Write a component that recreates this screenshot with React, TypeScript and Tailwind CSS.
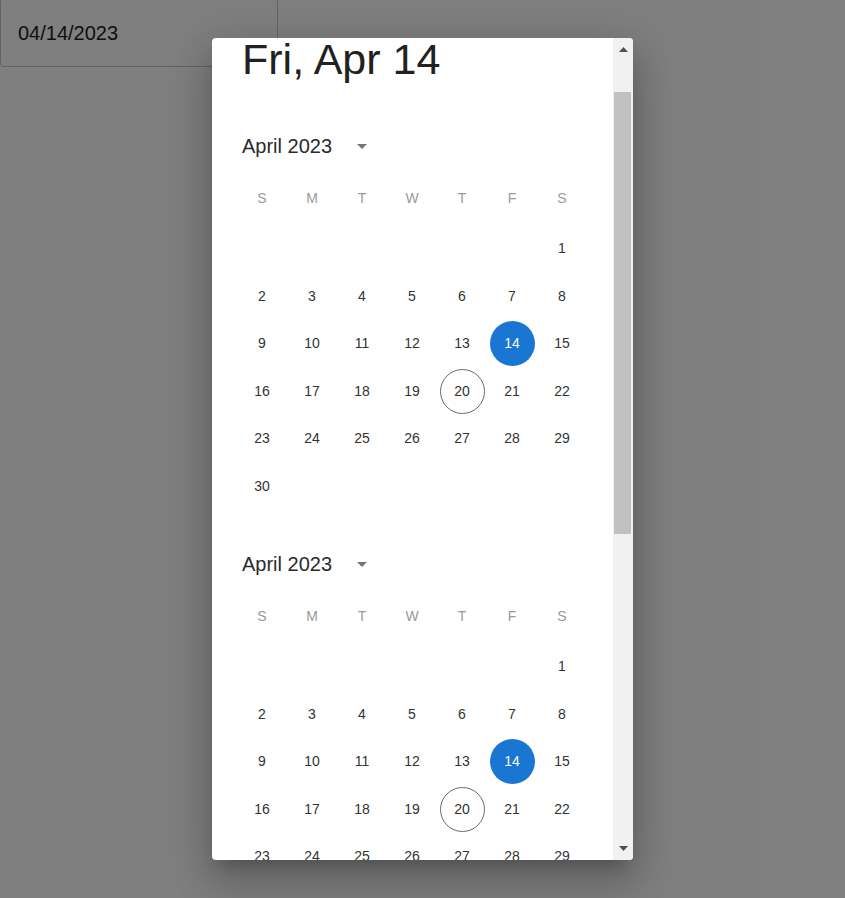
import React from "react";

const WEEKDAYS = ["S", "M", "T", "W", "T", "F", "S"];

// April 2023 starts on a Saturday
const LEAD = 6;
const DAYS_IN_MONTH = 30;
const SELECTED = 14;
const TODAY = 20;

function buildCells() {
  const cells: (number | null)[] = [];
  for (let i = 0; i < LEAD; i++) cells.push(null);
  for (let d = 1; d <= DAYS_IN_MONTH; d++) cells.push(d);
  while (cells.length % 7 !== 0) cells.push(null);
  return cells;
}

function ArrowDropDown() {
  return (
    <svg viewBox="0 0 24 24" className="w-6 h-6 ml-[18px] fill-[#757575]">
      <path d="M7 10l5 5 5-5z" />
    </svg>
  );
}

function Day({ day }: { day: number | null }) {
  if (day === null) return <div className="h-[47.5px]" />;
  const selected = day === SELECTED;
  const today = day === TODAY;
  return (
    <div className="h-[47.5px] flex items-center justify-center">
      <div
        className={
          "w-[45px] h-[45px] rounded-full flex items-center justify-center text-[14px] " +
          (selected
            ? "bg-[#1976d2] text-white"
            : today
            ? "border border-[#6b6b6b] text-[#333]"
            : "text-[#333]")
        }
      >
        {day}
      </div>
    </div>
  );
}

function Month() {
  const cells = buildCells();
  return (
    <div className="pb-[28px]">
      <div className="h-[52px] px-[30px] flex items-center">
        <span className="text-[20px] text-[#2b2b2b]">April 2023</span>
        <ArrowDropDown />
      </div>
      <div className="px-[25px]">
        <div className="grid grid-cols-[repeat(7,50px)] h-[53px] items-center">
          {WEEKDAYS.map((w, i) => (
            <div key={i} className="text-center text-[14px] text-[#9a9a9a]">
              {w}
            </div>
          ))}
        </div>
        <div className="grid grid-cols-[repeat(7,50px)]">
          {cells.map((d, i) => (
            <Day key={i} day={d} />
          ))}
        </div>
      </div>
    </div>
  );
}

function ScrollArrow({ up }: { up?: boolean }) {
  return (
    <div className="h-[23px] flex items-center justify-center">
      <svg width="9" height="5" viewBox="0 0 9 5" className="fill-[#505050]">
        {up ? <polygon points="4.5,0 9,5 0,5" /> : <polygon points="0,0 9,0 4.5,5" />}
      </svg>
    </div>
  );
}

export default function App() {
  return (
    <div className="relative w-[845px] h-[898px] bg-white overflow-hidden font-['Liberation_Sans',Arial,sans-serif]">
      <div className="w-[278px] h-[69px] -mt-[2px] border border-[#c4c4c4] rounded-[4px] px-[17px] flex items-center text-[20px] text-[#212121]">
        04/14/2023
      </div>

      <div className="absolute inset-0 bg-black/50 flex items-center justify-center">
        <div className="w-[421px] h-[822px] bg-white rounded-[4px] overflow-hidden flex shadow-[0_11px_15px_-7px_rgba(0,0,0,0.2),0_24px_38px_3px_rgba(0,0,0,0.14),0_9px_46px_8px_rgba(0,0,0,0.12)]">
          <div className="flex-1 overflow-hidden">
            <div className="h-[82px] px-[30px]">
              <div className="text-[43px] leading-[42px] text-[#212121]">Fri, Apr 14</div>
            </div>
            <Month />
            <Month />
          </div>

          <div className="w-[20px] bg-[#f1f1f1] flex flex-col">
            <ScrollArrow up />
            <div className="h-[31px]" />
            <div className="ml-[1px] w-[17px] h-[442px] bg-[#c1c1c1]" />
            <div className="flex-1" />
            <ScrollArrow />
          </div>
        </div>
      </div>
    </div>
  );
}
